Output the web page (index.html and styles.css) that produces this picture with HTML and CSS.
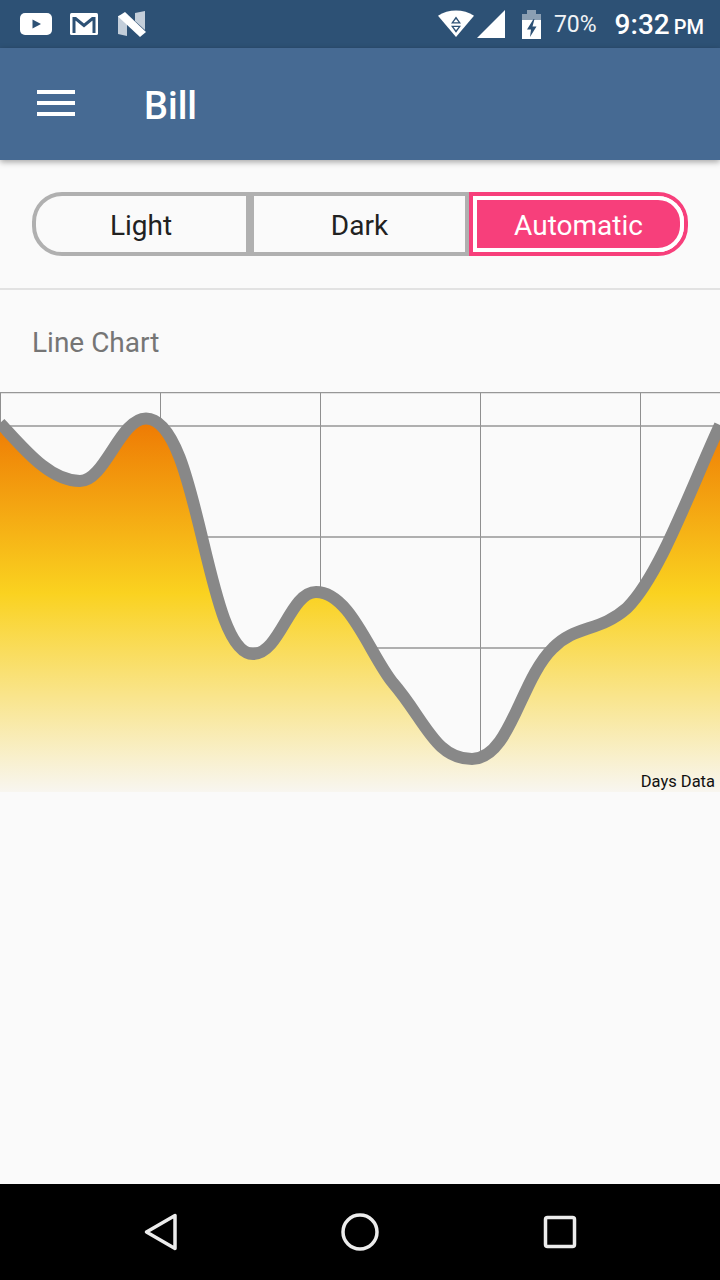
FILE: index.html
```html
<!DOCTYPE html>
<html lang="en">
<head>
<meta charset="utf-8">
<title>Bill</title>
<link rel="stylesheet" href="styles.css">
</head>
<body>
<div class="screen">
  <div class="status">
    <div class="status-left">
      <svg class="ic-yt" viewBox="0 0 32 22"><rect width="32" height="22" rx="5" fill="#fff"/><path d="M12.500 6.500 21 11l-8.500 4.500z" fill="#2d5175"/></svg>
      <svg class="ic-gm" viewBox="0 0 28 22"><rect width="28" height="22" rx="1.500" fill="#fff"/><path d="M4 20V5.500h1.500L14 12.500l8.500-7H24V20" fill="none" stroke="#2d5175" stroke-width="3"/></svg>
      <svg class="ic-n" viewBox="0 0 28 26"><path d="M0 5 9 3v22L0 23z" fill="#c3ceda"/><path d="M17 2 27 0v19L17 10z" fill="#c3ceda"/><path d="M0 5.500 7 1 28 21l-6 5z" fill="#fff"/></svg>
    </div>
    <div class="status-right">
      <svg class="ic-wifi" viewBox="0 0 36 30"><path d="M0 6.700C10-.2 26-.2 36 6.700L18 28z" fill="#fff"/><path d="M18 7.500l5 7H13zM13 16.700H23l-5 7z" fill="#2d5175"/><path d="M18 10l2.500 3.300h-5z" fill="#fff"/><path d="M15.500 18h5L18 21.300z" fill="#fff"/></svg>
      <svg class="ic-sig" viewBox="0 0 28 28"><path d="M0 28 28 0v28z" fill="#fff"/></svg>
      <svg class="ic-bat" viewBox="0 0 19 29"><path d="M5 0h9v4h5v10H0V4h5z" fill="#fff" opacity=".45"/><path d="M0 10h19v19H0z" fill="#fff"/><path d="M11.500 9 5 19.500h4L8 27l6.500-10.500h-4L12.500 9z" fill="#2d5175"/></svg>
      <span class="pct">70%</span>
      <span class="clock">9:32</span>
      <span class="ampm">PM</span>
    </div>
  </div>
  <header class="appbar">
    <div class="burger"><span></span><span></span><span></span></div>
    <h1 class="title">Bill</h1>
  </header>
  <main class="content">
    <div class="segment">
      <div class="seg seg-first">Light</div>
      <div class="seg">Dark</div>
      <div class="seg seg-active"><div class="seg-fill">Automatic</div></div>
    </div>
    <div class="divider"></div>
    <div class="chart-title">Line Chart</div>
    <svg class="chart" viewBox="0 392 720 400">
      <defs>
        <linearGradient id="area" gradientUnits="userSpaceOnUse" x1="0" y1="417" x2="0" y2="792">
          <stop offset="0" stop-color="#ee7803"/>
          <stop offset=".47" stop-color="#fad220"/>
          <stop offset="1" stop-color="#f8f6f0"/>
        </linearGradient>
      </defs>
      <g class="grid-v">
        <path d="M.5 392V792M160.500 392V792M320.500 392V792M480.500 392V792M640.500 392V792"/>
      </g>
      <g class="grid-h">
        <path d="M0 392.500H720M0 426H720M0 537H720M0 648H720"/>
      </g>
      <path class="area" fill="url(#area)" d="M0 423C25 450 50 481 80 481C105 481 120 418.500 146 418.500C200 418.500 205 654 253 654C280 654 290 592 316 592C350 592 370 655 393 683C425 720 435 759 472 759C510 759 520 680 553 648C575 625 600 632 627 608C660 575 690 490 720 425V792H0Z"/>
      <path class="line" d="M0 423C25 450 50 481 80 481C105 481 120 418.500 146 418.500C200 418.500 205 654 253 654C280 654 290 592 316 592C350 592 370 655 393 683C425 720 435 759 472 759C510 759 520 680 553 648C575 625 600 632 627 608C660 575 690 490 720 425"/>
      <text class="axis" x="715" y="787" text-anchor="end">Days Data</text>
    </svg>
  </main>
  <nav class="navbar">
    <svg class="nav-ic" viewBox="0 0 40 40"><path d="M6.500 20 35 3.500v33z" class="nav-stroke"/></svg>
    <svg class="nav-ic" viewBox="0 0 40 40"><circle cx="20" cy="20" r="17" class="nav-stroke"/></svg>
    <svg class="nav-ic" viewBox="0 0 40 40"><rect x="5.500" y="5.500" width="29" height="29" rx="2" class="nav-stroke"/></svg>
  </nav>
</div>
</body>
</html>
```

FILE: styles.css
```css
html, body { margin: 0; padding: 0; }
body { background: #fafafa; font-family: Roboto, "Liberation Sans", sans-serif; }
.screen { width: 720px; height: 1280px; display: flex; flex-direction: column; overflow: hidden; background: #fafafa; }

.status { height: 48px; flex: none; background: #2d5175; display: flex; align-items: center; justify-content: space-between; color: #fff; }
.status-left { display: flex; align-items: center; padding-left: 20px; }
.ic-yt { width: 32px; height: 22px; }
.ic-gm { width: 28px; height: 22px; margin-left: 18px; }
.ic-n { width: 28px; height: 26px; margin-left: 20px; overflow: visible; }
.status-right { display: flex; align-items: center; padding-right: 16px; }
.ic-wifi { width: 36px; height: 30px; }
.ic-sig { width: 28px; height: 28px; margin-left: 3px; }
.ic-bat { width: 19px; height: 29px; margin-left: 17px; }
.pct { font-size: 23px; margin-left: 13px; color: #f0f3f6; }
.clock { font-size: 28px; font-weight: 500; margin-left: 18px; }
.ampm { font-size: 20px; font-weight: 500; margin-left: 4px; margin-top: 5px; }

.appbar { height: 112px; flex: none; background: #466a93; display: flex; align-items: center; box-shadow: 0 2px 6px rgba(0,0,0,.35); position: relative; z-index: 1; }
.burger { width: 38px; margin-left: 37px; margin-top: -2px; display: flex; flex-direction: column; gap: 7px; }
.burger span { display: block; height: 4px; background: #fff; }
.title { margin: 3px 0 0 69px; font-size: 38px; font-weight: 500; color: #fff; }

.content { flex: 1; display: flex; flex-direction: column; }
.segment { display: flex; margin: 32px 32px 0; height: 64px; font-size: 28px; color: #212121; }
.seg { flex: 1; box-sizing: border-box; border: 4px solid #b0b0b0; padding-top: 2px; display: flex; align-items: center; justify-content: center; }
.seg-first { flex: 0 0 218px; border-radius: 30px 0 0 30px; }
.seg-active { border-color: #f73f7b; border-radius: 0 30px 30px 0; background: #fafafa; padding-top: 0; }
.seg-fill { align-self: stretch; flex: 1; box-sizing: border-box; border: 4px solid #fff; padding-top: 2px; border-radius: 0 26px 26px 0; background: #f73f7b; color: #fff; display: flex; align-items: center; justify-content: center; }
.divider { height: 2px; background: #e2e2e2; margin-top: 32px; }
.chart-title { font-size: 28px; color: #757575; padding: 37px 32px 0; line-height: 32px; height: 65px; }
.chart { display: block; width: 720px; height: 400px; flex: none; }
.grid-v path { stroke: #8f8f8f; stroke-width: 1; fill: none; }
.grid-h path { stroke: #979797; stroke-width: 1.3; fill: none; }
.line { fill: none; stroke: #888888; stroke-width: 12; }
.axis { font-family: Roboto, sans-serif; font-size: 16.500px; fill: #111; }

.navbar { height: 96px; flex: none; margin-top: auto; background: #000; display: flex; align-items: center; justify-content: center; gap: 160px; }
.nav-ic { width: 40px; height: 40px; }
.nav-stroke { fill: none; stroke: #ececec; stroke-width: 3.500; stroke-linejoin: round; }
```
